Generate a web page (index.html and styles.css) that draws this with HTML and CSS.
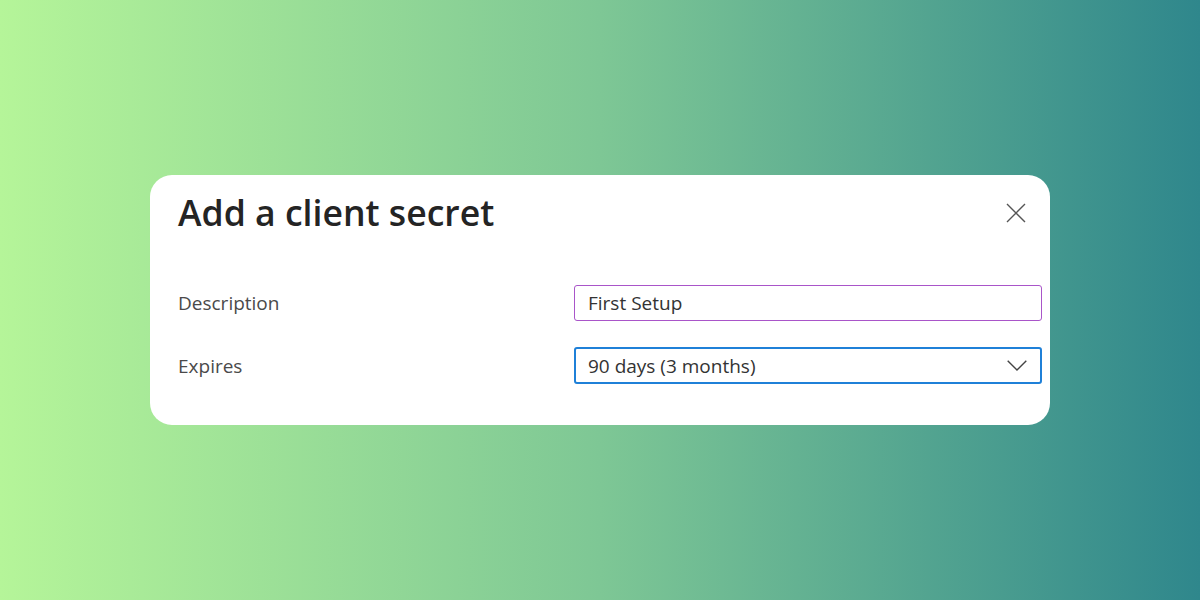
FILE: index.html
```html
<!DOCTYPE html>
<html lang="en">
<head>
<meta charset="utf-8">
<title>Add a client secret</title>
<link rel="stylesheet" href="styles.css">
</head>
<body>
<div class="stage">
  <div class="dialog">
    <div class="dialog-header">
      <h1 class="dialog-title">Add a client secret</h1>
      <button class="close-btn" aria-label="Close">
        <svg width="20" height="20" viewBox="0 0 20 20"><path d="M1 1 L19 19 M19 1 L1 19" stroke="#555" stroke-width="1.4" fill="none"/></svg>
      </button>
    </div>
    <div class="form">
      <div class="label">Description</div>
      <div class="field field-text">First Setup</div>
      <div class="label">Expires</div>
      <div class="field field-select">
        <span>90 days (3 months)</span>
        <svg class="chevron" width="20" height="11" viewBox="0 0 20 11"><path d="M0.7 0.7 L10 10 L19.3 0.7" stroke="#444" stroke-width="1.4" fill="none"/></svg>
      </div>
    </div>
  </div>
</div>
</body>
</html>
```
FILE: styles.css
```css
html, body {
  margin: 0;
  padding: 0;
}
body {
  width: 1200px;
  height: 600px;
  background: linear-gradient(90deg, #b5f599 0%, #7ec795 50%, #2f878c 100%);
  font-family: "Open Sans", "Noto Sans", sans-serif;
  overflow: hidden;
}
.stage {
  padding: 175px 150px 0 150px;
}
.dialog {
  width: 900px;
  height: 250px;
  box-sizing: border-box;
  background: #fff;
  border-radius: 22px;
  padding: 0 8px 0 28px;
}
.dialog-header {
  display: flex;
  justify-content: space-between;
  align-items: flex-start;
  height: 110px;
}
.dialog-title {
  margin: 13px 0 0 0;
  font-size: 35.6px;
  line-height: 48px;
  font-weight: 600;
  color: #242424;
}
.close-btn {
  margin: 28px 16px 0 0;
  padding: 0;
  border: none;
  background: none;
  width: 20px;
  height: 20px;
  display: block;
}
.close-btn svg { display: block; }
.form {
  display: grid;
  grid-template-columns: 396px 468px;
  row-gap: 26px;
  align-items: center;
}
.label {
  font-size: 19px;
  color: #4a4a4a;
}
.field {
  box-sizing: border-box;
  display: flex;
  align-items: center;
  font-size: 19px;
  color: #333;
  border-radius: 3px;
}
.field-text {
  height: 36px;
  border: 1px solid #a955c9;
  padding: 0 13px;
}
.field-select {
  height: 37px;
  border: 2px solid #1f80d8;
  padding: 0 13px 0 12px;
  justify-content: space-between;
}
.chevron { display: block; }
```
